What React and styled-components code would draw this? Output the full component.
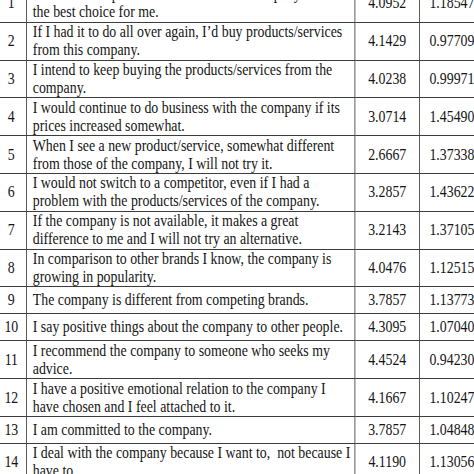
import React from 'react'
import styled, { createGlobalStyle } from 'styled-components'

const GlobalStyle = createGlobalStyle`
  html, body {
    margin: 0;
    padding: 0;
    background: #ffffff;
  }
`

// the screenshot is squeezed sideways, so the table is drawn wide and scaled in x
const SQUEEZE = 0.84

const rows = [
  { no: 1, lines: ['I consider the products/services of this company to be', 'the best choice for me.'], mean: '4.0952', sd: '1.18547' },
  { no: 2, lines: ['If I had it to do all over again, I’d buy products/services', 'from this company.'], mean: '4.1429', sd: '0.97709' },
  { no: 3, lines: ['I intend to keep buying the products/services from the', 'company.'], mean: '4.0238', sd: '0.99971' },
  { no: 4, lines: ['I would continue to do business with the company if its', 'prices increased somewhat.'], mean: '3.0714', sd: '1.45490' },
  { no: 5, lines: ['When I see a new product/service, somewhat different', 'from those of the company, I will not try it.'], mean: '2.6667', sd: '1.37338' },
  { no: 6, lines: ['I would not switch to a competitor, even if I had a', 'problem with the products/services of the company.'], mean: '3.2857', sd: '1.43622' },
  { no: 7, lines: ['If the company is not available, it makes a great', 'difference to me and I will not try an alternative.'], mean: '3.2143', sd: '1.37105' },
  { no: 8, lines: ['In comparison to other brands I know, the company is', 'growing in popularity.'], mean: '4.0476', sd: '1.12515' },
  { no: 9, lines: ['The company is different from competing brands.'], mean: '3.7857', sd: '1.13773' },
  { no: 10, lines: ['I say positive things about the company to other people.'], mean: '4.3095', sd: '1.07040' },
  { no: 11, lines: ['I recommend the company to someone who seeks my', 'advice.'], mean: '4.4524', sd: '0.94230' },
  { no: 12, lines: ['I have a positive emotional relation to the company I', 'have chosen and I feel attached to it.'], mean: '4.1667', sd: '1.10247' },
  { no: 13, lines: ['I am committed to the company.'], mean: '3.7857', sd: '1.04848' },
  { no: 14, lines: ['I deal with the company because I want to,  not because I', 'have to.'], mean: '4.1190', sd: '1.13056' },
]

export default function App() {
  return (
    <>
      <GlobalStyle />
      <Frame>
        <Sheet>
          <Table>
            <colgroup>
              <col style={{ width: 36 }} />
              <col style={{ width: 391 }} />
              <col style={{ width: 77 }} />
              <col style={{ width: 77 }} />
            </colgroup>
            <tbody>
              {rows.map(r => (
                <Row key={r.no} $tall={r.lines.length > 1}>
                  <NumCell>{r.no}</NumCell>
                  <TextCell>
                    {r.lines.map((l, i) => <Line key={i}>{l}</Line>)}
                  </TextCell>
                  <NumCell>{r.mean}</NumCell>
                  <NumCell>{r.sd}</NumCell>
                </Row>
              ))}
            </tbody>
          </Table>
        </Sheet>
      </Frame>
    </>
  )
}

const Frame = styled.div`
  width: 474px;
  height: 474px;
  overflow: hidden;
  background: #ffffff;
`

const Sheet = styled.div`
  transform: scaleX(${SQUEEZE});
  transform-origin: 0 0;
  width: 640px;
`

const Table = styled.table`
  border-collapse: collapse;
  table-layout: fixed;
  width: 581px;
  margin: -16px 0 0 -5px;
  font-family: "Liberation Serif", "Times New Roman", serif;
  font-size: 16.5px;
  line-height: 18px;
  color: #141414;
`

const Row = styled.tr`
  height: ${props => (props.$tall ? '37.8px' : '27px')};
`

const Cell = styled.td`
  border: 1.6px solid #3c3c3c;
  padding: 0 7px;
  vertical-align: middle;
  white-space: pre;
  overflow: hidden;
`

const NumCell = styled(Cell)`
  text-align: center;
  padding: 0;
`

const TextCell = styled(Cell)`
  text-align: left;
`

const Line = styled.span`
  display: block;
`
